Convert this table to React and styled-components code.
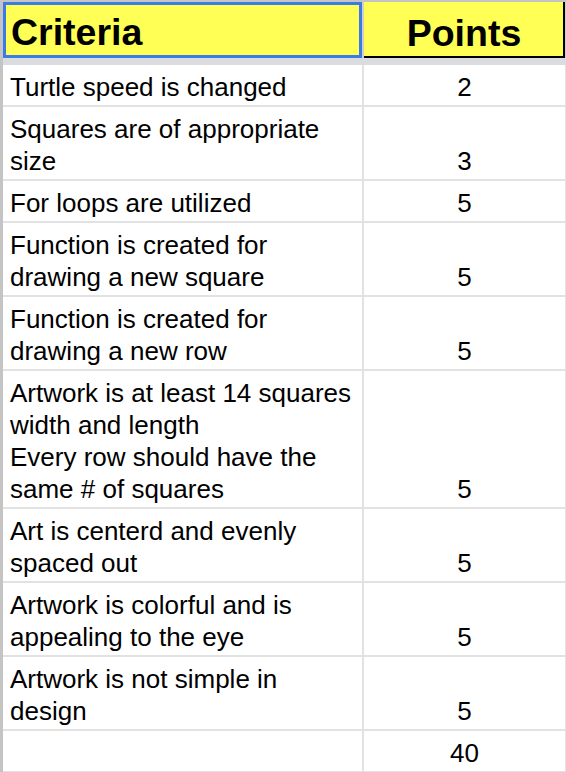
import React from "react";
import styled, { createGlobalStyle } from "styled-components";

const GlobalStyle = createGlobalStyle`
  html, body {
    margin: 0;
    padding: 0;
    background: #ffffff;
  }
  body {
    font-family: "Liberation Sans", Arial, sans-serif;
    color: #000000;
  }
`;

const Sheet = styled.div`
  box-sizing: border-box;
  width: 566px;
  height: 772px;
  overflow: hidden;
  border-left: 3px solid #c4c4c4;
  border-top: 2px solid #c4c4c4;
  background: #ffffff;
`;

const HeadRow = styled.div`
  display: grid;
  grid-template-columns: 359px 201px;
  column-gap: 2px;
  padding-right: 1px;
  background: #cfcfcf;
`;

const HeadCell = styled.div`
  box-sizing: border-box;
  height: 56px;
  display: flex;
  align-items: flex-end;
  justify-content: ${(p) => (p.$center ? "center" : "flex-start")};
  padding: 0 4px 2px 5px;
  background: #ffff55;
  font-size: 37.5px;
  font-weight: 700;
  line-height: 42px;
  border: ${(p) => (p.$selected ? "3px solid #3b7be4" : "none")};
  border-right: ${(p) => (p.$thick ? "2px solid #000" : undefined)};
  border-bottom: ${(p) => (p.$thick ? "2px solid #000" : undefined)};
`;

const Freeze = styled.div`
  height: 7px;
  background: #dadce0;
`;

const Row = styled.div`
  display: grid;
  grid-template-columns: 359px 201px;
  column-gap: 2px;
  padding: 0 1px 2px 0;
  background: #e2e2e2;
`;

const Cell = styled.div`
  box-sizing: border-box;
  display: flex;
  align-items: flex-end;
  justify-content: ${(p) => (p.$center ? "center" : "flex-start")};
  padding: 6px 7px 2px;
  background: #ffffff;
  font-size: 26px;
  line-height: 32px;
`;

const rows = [
  { text: ["Turtle speed is changed"], pts: "2" },
  { text: ["Squares are of appropriate", "size"], pts: "3" },
  { text: ["For loops are utilized"], pts: "5" },
  { text: ["Function is created for", "drawing a new square"], pts: "5" },
  { text: ["Function is created for", "drawing a new row"], pts: "5" },
  {
    text: [
      "Artwork is at least 14 squares",
      "width and length",
      "Every row should have the",
      "same # of squares",
    ],
    pts: "5",
  },
  { text: ["Art is centerd and evenly", "spaced out"], pts: "5" },
  { text: ["Artwork is colorful and is", "appealing to the eye"], pts: "5" },
  { text: ["Artwork is not simple in", "design"], pts: "5" },
  { text: [""], pts: "40" },
];

export default function App() {
  return (
    <>
      <GlobalStyle />
      <Sheet>
        <HeadRow>
          <HeadCell $selected>Criteria</HeadCell>
          <HeadCell $center $thick>Points</HeadCell>
        </HeadRow>
        <Freeze />
        {rows.map((r, i) => (
          <Row key={i}>
            <Cell>
              <span>
                {r.text.map((line, j) => (
                  <React.Fragment key={j}>
                    {j > 0 && <br />}
                    {line || "\u00a0"}
                  </React.Fragment>
                ))}
              </span>
            </Cell>
            <Cell $center>{r.pts}</Cell>
          </Row>
        ))}
      </Sheet>
    </>
  );
}
